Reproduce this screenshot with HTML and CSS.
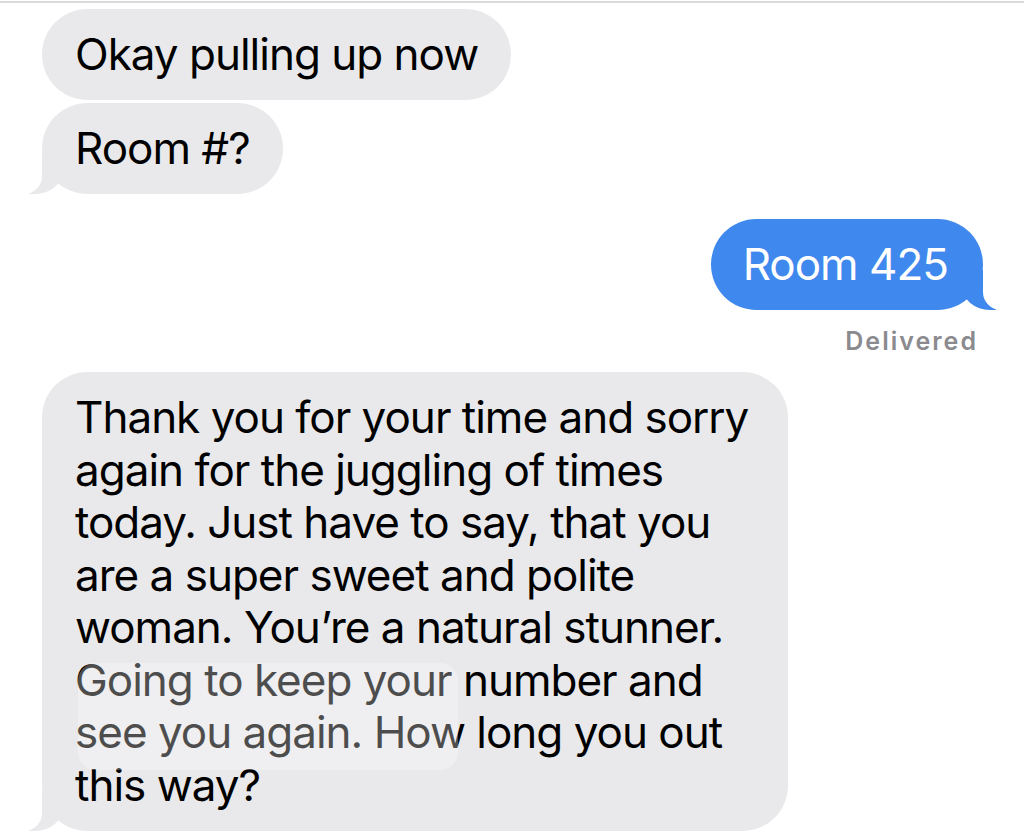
FILE: index.html
```html
<!DOCTYPE html>
<html lang="en">
<head>
<meta charset="utf-8">
<title>Messages</title>
<link rel="stylesheet" href="styles.css">
</head>
<body>
<div class="thread">
  <div class="msg in first">Okay pulling up now</div>
  <div class="msg in tail">Room #?</div>
  <div class="msg out tail">Room 425</div>
  <div class="status">Delivered</div>
  <div class="msg in tail big">Thank you for your time and sorry<br>again for the juggling of times<br>today. Just have to say, that you<br>are a super sweet and polite<br>woman. You’re a natural stunner.<br>Going to keep your number and<br>see you again. How long you out<br>this way?<span class="watermark"></span></div>
</div>
</body>
</html>
```
FILE: styles.css
```css
html, body {
  margin: 0;
  padding: 0;
  background: #ffffff;
}

body {
  padding-top: 1px;
  font-family: Inter, "Liberation Sans", sans-serif;
  -webkit-font-smoothing: antialiased;
}

.thread {
  border-top: 2px solid #dadada;
  padding: 6px 41px 0 42px;
  display: flex;
  flex-direction: column;
  align-items: flex-start;
  height: 836px;
  box-sizing: border-box;
  overflow: hidden;
}

.msg {
  position: relative;
  font-size: 44px;
  line-height: 52.5px;
  letter-spacing: -1px;
  padding: 19px 33px 19.5px 33px;
  border-radius: 45.5px;
  color: #000;
  white-space: nowrap;
}

.in {
  background: #e9e9eb;
}

.first + .in {
  margin-top: 3px;
}

.out {
  align-self: flex-end;
  background: #3f88ee;
  color: #fff;
  margin-top: 25px;
  padding-left: 32px;
  padding-right: 35px;
}

.status {
  align-self: flex-end;
  margin: 16px 5px 0 0;
  font-size: 25px;
  line-height: 30px;
  font-weight: 600;
  color: #8b8b8f;
  letter-spacing: 2px;
}

.big {
  margin-top: 16px;
  width: 746px;
  box-sizing: border-box;
}

/* iMessage tails */
.in.tail::before {
  content: "";
  position: absolute;
  left: -13px;
  bottom: 0;
  width: 34px;
  height: 40px;
  background: #e9e9eb;
  border-bottom-right-radius: 28px 24px;
}

.in.tail::after {
  content: "";
  position: absolute;
  left: -44px;
  bottom: 0;
  width: 44px;
  height: 40px;
  background: #fff;
  border-bottom-right-radius: 18px;
}

.out.tail::before {
  content: "";
  position: absolute;
  right: -13px;
  bottom: 0;
  width: 34px;
  height: 40px;
  background: #3f88ee;
  border-bottom-left-radius: 28px 24px;
}

.out.tail::after {
  content: "";
  position: absolute;
  right: -44px;
  bottom: 0;
  width: 44px;
  height: 40px;
  background: #fff;
  border-bottom-left-radius: 18px;
}

.watermark {
  position: absolute;
  left: 36px;
  top: 291px;
  width: 380px;
  height: 107px;
  border-radius: 18px;
  background: rgba(255, 255, 255, 0.3);
}
```
